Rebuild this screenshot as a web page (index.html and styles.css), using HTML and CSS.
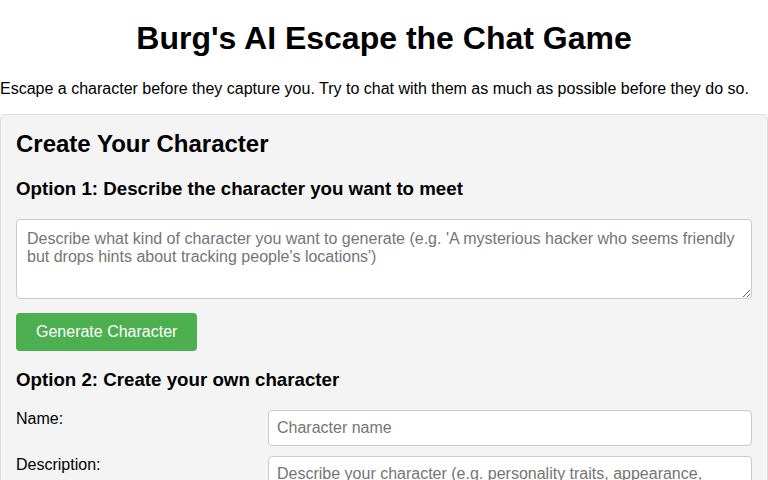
FILE: index.html
```html
<!DOCTYPE html>
<html lang="en">
<head>
<meta charset="utf-8">
<title>Burg's AI Escape the Chat Game</title>
<link rel="stylesheet" href="styles.css">
</head>
<body>
  <h1 class="title">Burg's AI Escape the Chat Game</h1>
  <p class="intro">Escape a character before they capture you. Try to chat with them as much as possible before they do so.</p>
  <section class="panel">
    <h2 class="panel-title">Create Your Character</h2>
    <h3 class="option-title">Option 1: Describe the character you want to meet</h3>
    <textarea class="prompt-box" placeholder="Describe what kind of character you want to generate (e.g. 'A mysterious hacker who seems friendly but drops hints about tracking people's locations')"></textarea>
    <button class="btn-generate" type="button">Generate Character</button>
    <h3 class="option-title option-two">Option 2: Create your own character</h3>
    <div class="form-row">
      <label class="form-label" for="name">Name:</label>
      <input class="form-input" id="name" type="text" placeholder="Character name">
    </div>
    <div class="form-row">
      <label class="form-label" for="desc">Description:</label>
      <textarea class="form-input form-textarea" id="desc" placeholder="Describe your character (e.g. personality traits, appearance, background)"></textarea>
    </div>
  </section>
</body>
</html>
```

FILE: styles.css
```css
* { box-sizing: border-box; }
body {
  margin: 0;
  font-family: "Liberation Sans", Arial, sans-serif;
  color: #000;
  background: #fff;
}
.title {
  font-size: 32px;
  text-align: center;
  margin: 20px 0 23px;
  line-height: 37px;
}
.intro {
  font-size: 16px;
  margin: 0 0 16px;
  line-height: 18px;
}
.panel {
  background: #f4f4f4;
  border: 1px solid #ddd;
  border-radius: 5px;
  padding: 15px;
}
.panel-title {
  font-size: 24px;
  margin: 0 0 20px;
  line-height: 28px;
}
.option-title {
  font-size: 18.72px;
  margin: 0 0 19px;
  line-height: 22px;
}
.prompt-box {
  display: block;
  width: 100%;
  height: 80px;
  padding: 10px;
  border: 1px solid #ccc;
  border-radius: 4px;
  font-family: "Liberation Sans", Arial, sans-serif;
  font-size: 16px;
  line-height: 18px;
  background: #fff;
  margin: 0 0 14px;
}
.btn-generate {
  display: block;
  background: #4caf50;
  color: #fff;
  border: none;
  border-radius: 4px;
  padding: 10px 20px;
  font-family: "Liberation Sans", Arial, sans-serif;
  font-size: 16px;
  line-height: 18px;
  margin: 0 0 18px;
}
.option-two { margin-bottom: 19px; }
.form-row {
  display: grid;
  grid-template-columns: 1fr 2fr;
  gap: 10px;
  align-items: start;
  margin-bottom: 10px;
}
.form-label {
  font-size: 16px;
  line-height: 18px;
}
.form-input {
  width: 100%;
  padding: 8px;
  border: 1px solid #ccc;
  border-radius: 4px;
  font-family: "Liberation Sans", Arial, sans-serif;
  font-size: 16px;
  line-height: 18px;
  background: #fff;
  min-width: 0;
}
.form-textarea {
  display: block;
  height: 80px;
  resize: vertical;
}
::placeholder { color: #757575; }
```
